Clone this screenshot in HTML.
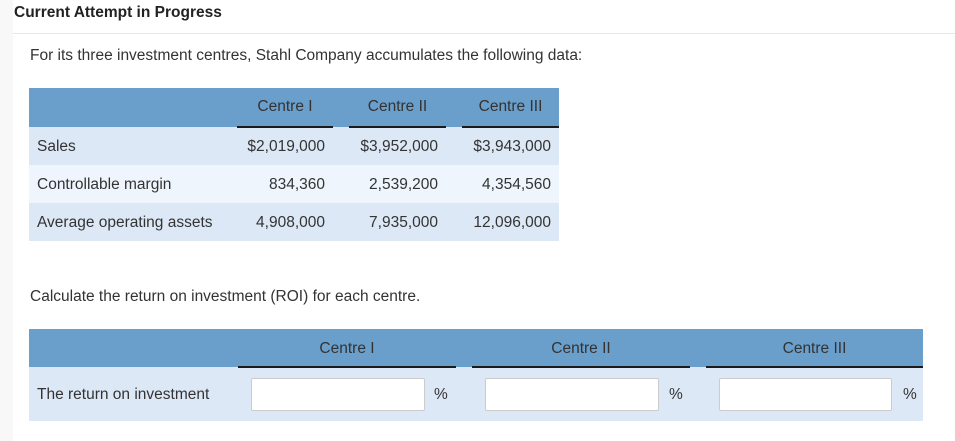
<!DOCTYPE html>
<html><head><style>
body{margin:0;width:955px;height:441px;background:#fff;font-family:"Liberation Sans",sans-serif;color:#333;position:relative;overflow:hidden}
.strip{position:absolute;left:0;top:0;width:13px;height:441px;background:#f8f8f8}
.a{position:absolute;white-space:nowrap}
.sep{position:absolute;left:13px;top:33px;width:942px;height:1px;background:#e8e8e8}
.bg{position:absolute}
.line{position:absolute;height:2px;background:#1a1a1a}
.t{font-size:15.5px}
.r{text-align:right}
.inp{position:absolute;background:#fff;border:1px solid #ccc;border-radius:2px;height:31px}
</style></head><body>
<div class="strip"></div>
<div class="a" style="left:14px;top:4px;font-size:15.5px;font-weight:bold;color:#222">Current Attempt in Progress</div>
<div class="sep"></div>
<div class="a t" style="left:30px;top:47px">For its three investment centres, Stahl Company accumulates the following data:</div>

<div class="bg" style="left:29px;top:88px;width:530px;height:39px;background:#6a9ecb"></div>
<div class="bg" style="left:29px;top:127px;width:530px;height:38px;background:#dde8f7"></div>
<div class="bg" style="left:29px;top:165px;width:530px;height:38px;background:#eef5fd"></div>
<div class="bg" style="left:29px;top:203px;width:530px;height:38px;background:#dde8f7"></div>
<div class="line" style="left:237px;top:126px;width:96px"></div>
<div class="line" style="left:349px;top:126px;width:97px"></div>
<div class="line" style="left:462px;top:126px;width:97px"></div>
<div class="a t" style="left:237px;width:96px;top:98px;text-align:center">Centre I</div>
<div class="a t" style="left:349px;width:97px;top:98px;text-align:center">Centre II</div>
<div class="a t" style="left:462px;width:97px;top:98px;text-align:center">Centre III</div>

<div class="a t" style="left:37px;top:138px">Sales</div>
<div class="a t r" style="left:200px;width:125px;top:138px">$2,019,000</div>
<div class="a t r" style="left:300px;width:138px;top:138px">$3,952,000</div>
<div class="a t r" style="left:420px;width:131px;top:138px">$3,943,000</div>
<div class="a t" style="left:37px;top:176px">Controllable margin</div>
<div class="a t r" style="left:200px;width:125px;top:176px">834,360</div>
<div class="a t r" style="left:300px;width:138px;top:176px">2,539,200</div>
<div class="a t r" style="left:420px;width:131px;top:176px">4,354,560</div>
<div class="a t" style="left:37px;top:214px">Average operating assets</div>
<div class="a t r" style="left:200px;width:125px;top:214px">4,908,000</div>
<div class="a t r" style="left:300px;width:138px;top:214px">7,935,000</div>
<div class="a t r" style="left:420px;width:131px;top:214px">12,096,000</div>

<div class="a t" style="left:30px;top:288px">Calculate the return on investment (ROI) for each centre.</div>

<div class="bg" style="left:29px;top:329px;width:894px;height:38px;background:#6a9ecb"></div>
<div class="bg" style="left:29px;top:367px;width:894px;height:54px;background:#dde8f7"></div>
<div class="line" style="left:238px;top:366px;width:218px"></div>
<div class="line" style="left:472px;top:366px;width:218px"></div>
<div class="line" style="left:706px;top:366px;width:217px"></div>
<div class="a t" style="left:238px;width:218px;top:340px;text-align:center">Centre I</div>
<div class="a t" style="left:472px;width:218px;top:340px;text-align:center">Centre II</div>
<div class="a t" style="left:706px;width:217px;top:340px;text-align:center">Centre III</div>
<div class="a t" style="left:37px;top:386px">The return on investment</div>
<div class="inp" style="left:251px;top:378px;width:172px"></div>
<div class="inp" style="left:485px;top:378px;width:172px"></div>
<div class="inp" style="left:719px;top:378px;width:171px"></div>
<div class="a t" style="left:434px;top:386px">%</div>
<div class="a t" style="left:669px;top:386px">%</div>
<div class="a t" style="left:903px;top:386px">%</div>
</body></html>
